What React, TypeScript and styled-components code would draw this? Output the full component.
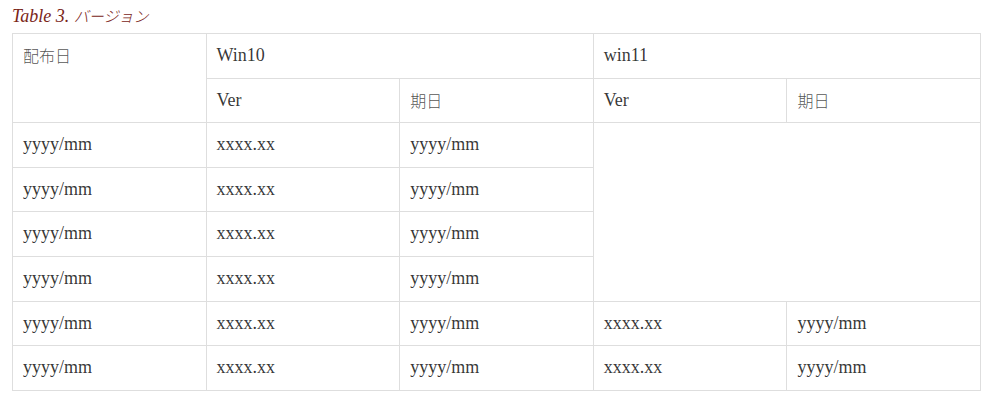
import React from 'react'
import styled, { createGlobalStyle, css } from 'styled-components'

const GlobalStyle = createGlobalStyle`
  html, body {
    margin: 0;
    padding: 0;
    background: #fff;
  }
  body {
    font-family: "Liberation Serif", "Noto Sans CJK JP", serif;
  }
`

const Page = styled.div`
  padding: 4px 12px 0 12px;
`

const Table = styled.table`
  width: 969px;
  table-layout: fixed;
  border-collapse: collapse;
  border: 1px solid #dedede;
  font-size: 18px;
  color: rgba(0, 0, 0, 0.8);
`

const Caption = styled.caption`
  caption-side: top;
  text-align: left;
  font-style: italic;
  font-size: 18px;
  line-height: 23px;
  color: #7a2518;
  padding-bottom: 5px;
  white-space: nowrap;
`

const Jp = styled.span`
  font-family: "Noto Sans CJK JP", sans-serif;
  font-size: 15px;
  font-weight: 300;
`

const cellStyle = css<{ $jp?: boolean }>`
  border: 1px solid #dedede;
  padding: 8px 10px;
  line-height: 27.6px;
  text-align: left;
  vertical-align: top;
  font-weight: normal;
  ${(p) =>
    p.$jp &&
    css`
      font-family: "Noto Sans CJK JP", sans-serif;
      font-size: 16px;
      font-weight: 300;
      color: rgba(0, 0, 0, 0.7);
    `}
`

const Cell = styled.td<{ $jp?: boolean }>`
  ${cellStyle}
`

const Head = styled.th<{ $jp?: boolean }>`
  ${cellStyle}
`

const topRows = 4
const bottomRows = 2

export default function App() {
  return (
    <Page>
      <GlobalStyle />
      <Table>
        <Caption>
          Table 3. <Jp>バージョン</Jp>
        </Caption>
        <colgroup>
          <col style={{ width: '20%' }} />
          <col style={{ width: '20%' }} />
          <col style={{ width: '20%' }} />
          <col style={{ width: '20%' }} />
          <col style={{ width: '20%' }} />
        </colgroup>
        <thead>
          <tr>
            <Head $jp rowSpan={2}>配布日</Head>
            <Head colSpan={2}>Win10</Head>
            <Head colSpan={2}>win11</Head>
          </tr>
          <tr>
            <Head>Ver</Head>
            <Head $jp>期日</Head>
            <Head>Ver</Head>
            <Head $jp>期日</Head>
          </tr>
        </thead>
        <tbody>
          {Array.from({ length: topRows }).map((_, i) => (
            <tr key={'t' + i}>
              <Cell>yyyy/mm</Cell>
              <Cell>xxxx.xx</Cell>
              <Cell>yyyy/mm</Cell>
              {i === 0 && <Cell rowSpan={topRows} colSpan={2} />}
            </tr>
          ))}
          {Array.from({ length: bottomRows }).map((_, i) => (
            <tr key={'b' + i}>
              <Cell>yyyy/mm</Cell>
              <Cell>xxxx.xx</Cell>
              <Cell>yyyy/mm</Cell>
              <Cell>xxxx.xx</Cell>
              <Cell>yyyy/mm</Cell>
            </tr>
          ))}
        </tbody>
      </Table>
    </Page>
  )
}
